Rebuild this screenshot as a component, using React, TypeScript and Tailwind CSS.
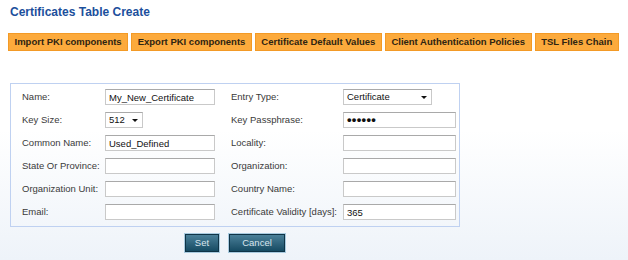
import React from 'react';

const inputClass =
    'block h-[16px] border border-[#c9c9c9] border-t-[#a9a9a9] bg-white px-[3px] text-[9.5px] leading-[14px] text-[#111] outline-none';

function TextField({ value = '', width = 'w-[110px]' }: { value?: string; width?: string }) {
    return <input readOnly value={value} className={`${inputClass} ${width}`} />;
}

function SelectField({ value, width }: { value: string; width: string }) {
    return (
        <div className={`${inputClass} ${width} flex items-center justify-between pr-[4px]`}>
            <span>{value}</span>
            <span className="h-0 w-0 border-x-[3px] border-t-[3px] border-x-transparent border-t-[#111]" />
        </div>
    );
}

const tabs = [
    'Import PKI components',
    'Export PKI components',
    'Certificate Default Values',
    'Client Authentication Policies',
    'TSL Files Chain',
];

function Label({ children }: { children: React.ReactNode }) {
    return <div className="h-[16px] text-[9.5px] leading-[16px] text-[#3a3a3a]">{children}</div>;
}

export default function App() {
    return (
        <div
            className="h-[260px] w-[628px] bg-gradient-to-b from-white via-white to-[#eef3f9]"
            style={{ fontFamily: '"Liberation Sans", Arial, sans-serif' }}
        >
            <h1 className="pl-[10px] pt-[4px] text-[12px] font-bold leading-[16px] text-[#1c4f9c]">
                Certificates Table Create
            </h1>

            <nav className="mt-[13px] flex gap-[3px] pl-[8px]">
                {tabs.map((t) => (
                    <div
                        key={t}
                        className="h-[18px] border border-[#f39a26] bg-[#fcaa3c] px-[5.5px] text-[9.5px] font-bold leading-[16px] text-[#2e2412]"
                    >
                        {t}
                    </div>
                ))}
            </nav>

            <div className="ml-[10px] mt-[32px] w-[450px] border border-[#bfd1f1] pb-[6px] pl-[11px] pr-[4px] pt-[5px]">
                <div className="grid grid-cols-[83px_126px_112px_113px] gap-y-[7px]">
                    <Label>Name:</Label>
                    <TextField value="My_New_Certificate" />
                    <Label>Entry Type:</Label>
                    <SelectField value="Certificate" width="w-[89px]" />

                    <Label>Key Size:</Label>
                    <SelectField value="512" width="w-[38px]" />
                    <Label>Key Passphrase:</Label>
                    <div className={`${inputClass} w-[113px] font-bold tracking-[0.3px]`}>
                        <span className="text-[13px] leading-[14px]">••••••</span>
                    </div>

                    <Label>Common Name:</Label>
                    <TextField value="Used_Defined" />
                    <Label>Locality:</Label>
                    <TextField width="w-[113px]" />

                    <Label>State Or Province:</Label>
                    <TextField />
                    <Label>Organization:</Label>
                    <TextField width="w-[113px]" />

                    <Label>Organization Unit:</Label>
                    <TextField />
                    <Label>Country Name:</Label>
                    <TextField width="w-[113px]" />

                    <Label>Email:</Label>
                    <TextField />
                    <Label>Certificate Validity [days]:</Label>
                    <TextField value="365" width="w-[113px]" />
                </div>
            </div>

            <div className="ml-[10px] mt-[7px] flex w-[450px] justify-center gap-[10px]">
                <button className="h-[18px] w-[34px] border border-[#0f3447] bg-gradient-to-b from-[#4a8099] to-[#164b63] text-[9.5px] text-[#d9e5ee] shadow-[0_0_0_1px_#a9cbe0]">
                    Set
                </button>
                <button className="h-[18px] w-[56px] border border-[#0f3447] bg-gradient-to-b from-[#4a8099] to-[#164b63] text-[9.5px] text-[#d9e5ee] shadow-[0_0_0_1px_#a9cbe0]">
                    Cancel
                </button>
            </div>
        </div>
    );
}
